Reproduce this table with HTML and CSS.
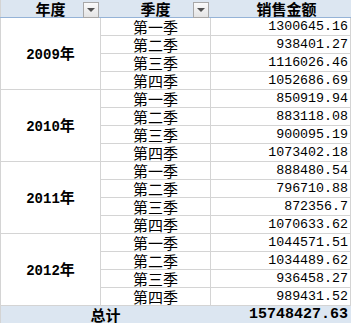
FILE: index.html
```html
<!DOCTYPE html>
<html>
<head>
<meta charset="utf-8">
<link rel="stylesheet" href="styles.css">
</head>
<body>
<table class="pivot">
  <colgroup>
    <col class="c1"><col class="c2"><col class="c3">
  </colgroup>
  <thead>
    <tr>
      <th class="hcell">年度<span class="filter"><span class="tri"></span></span></th>
      <th class="hcell">季度<span class="filter"><span class="tri"></span></span></th>
      <th class="hcell amt">销售金额</th>
    </tr>
  </thead>
  <tbody class="grp">
    <tr><td class="year" rowspan="4">2009<span class="cj">年</span></td><td class="q">第一季</td><td class="num">1300645.16</td></tr>
    <tr><td class="q">第二季</td><td class="num">938401.27</td></tr>
    <tr><td class="q">第三季</td><td class="num">1116026.46</td></tr>
    <tr><td class="q">第四季</td><td class="num">1052686.69</td></tr>
  </tbody>
  <tbody class="grp">
    <tr><td class="year" rowspan="4">2010<span class="cj">年</span></td><td class="q">第一季</td><td class="num">850919.94</td></tr>
    <tr><td class="q">第二季</td><td class="num">883118.08</td></tr>
    <tr><td class="q">第三季</td><td class="num">900095.19</td></tr>
    <tr><td class="q">第四季</td><td class="num">1073402.18</td></tr>
  </tbody>
  <tbody class="grp">
    <tr><td class="year" rowspan="4">2011<span class="cj">年</span></td><td class="q">第一季</td><td class="num">888480.54</td></tr>
    <tr><td class="q">第二季</td><td class="num">796710.88</td></tr>
    <tr><td class="q">第三季</td><td class="num">872356.7</td></tr>
    <tr><td class="q">第四季</td><td class="num">1070633.62</td></tr>
  </tbody>
  <tbody class="grp">
    <tr><td class="year" rowspan="4">2012<span class="cj">年</span></td><td class="q">第一季</td><td class="num">1044571.51</td></tr>
    <tr><td class="q">第二季</td><td class="num">1034489.62</td></tr>
    <tr><td class="q">第三季</td><td class="num">936458.27</td></tr>
    <tr><td class="q">第四季</td><td class="num">989431.52</td></tr>
  </tbody>
  <tfoot>
    <tr><td class="tlabel" colspan="2">总计</td><td class="tnum">15748427.63</td></tr>
  </tfoot>
</table>
</body>
</html>
```
FILE: styles.css
```css
html, body {
  margin: 0;
  padding: 0;
  background: #ffffff;
}
.pivot {
  border-collapse: collapse;
  table-layout: fixed;
  width: 351px;
  font-family: "Noto Sans CJK SC", "Liberation Sans", sans-serif;
  color: #000;
}
.c1 { width: 100px; }
.c2 { width: 110px; }
.c3 { width: 140px; }
.pivot td, .pivot th {
  padding: 0;
  height: 17px;
  line-height: 17px;
  border: 1px solid #d4d4d4;
  white-space: nowrap;
}
.hcell {
  position: relative;
  background: #dce6f1;
  font-size: 15px;
  font-weight: bold;
  text-align: center;
  border-top: 0 !important;
  border-bottom: 1px solid #95b3d7 !important;
  border-left-color: #dce6f1 !important;
  border-right-color: #dce6f1 !important;
}
.pivot thead th:first-child { border-left-color: #d4d4d4 !important; }
.hcell.amt { padding-left: 12px; }
.filter {
  position: absolute;
  right: 1px;
  top: 2px;
  width: 14px;
  height: 14px;
  border: 1px solid #a8a8a8;
  background: linear-gradient(#fafafa, #e4e4e4);
  display: flex;
  align-items: center;
  justify-content: center;
}
.tri {
  width: 0;
  height: 0;
  border-left: 4px solid transparent;
  border-right: 4px solid transparent;
  border-top: 4px solid #505050;
}
.grp + .grp td.year { border-top: 1px solid #95b3d7; }
.year {
  font-family: "Liberation Mono", monospace;
  font-weight: bold;
  font-size: 14px;
  text-align: center;
  vertical-align: middle;
}
.year .cj {
  font-family: "Noto Sans CJK SC", sans-serif;
  font-size: 15px;
}
.q {
  font-size: 15px;
  text-align: center;
  vertical-align: bottom;
}
.num {
  font-family: "Liberation Mono", monospace;
  font-size: 13.3px;
  text-align: right;
  padding-right: 2px !important;
  vertical-align: bottom;
}
.tlabel, .tnum {
  background: #dce6f1;
  font-weight: bold;
  border-top: 1px solid #95b3d7 !important;
  border-left-color: #dce6f1 !important;
  border-right-color: #dce6f1 !important;
  border-bottom: 0 !important;
}
.pivot tfoot td:first-child { border-left-color: #d4d4d4 !important; }
.tlabel {
  font-size: 15px;
  text-align: center;
}
.tnum {
  font-family: "Liberation Mono", monospace;
  font-size: 15px;
  text-align: right;
  padding-right: 2px !important;
}
```
